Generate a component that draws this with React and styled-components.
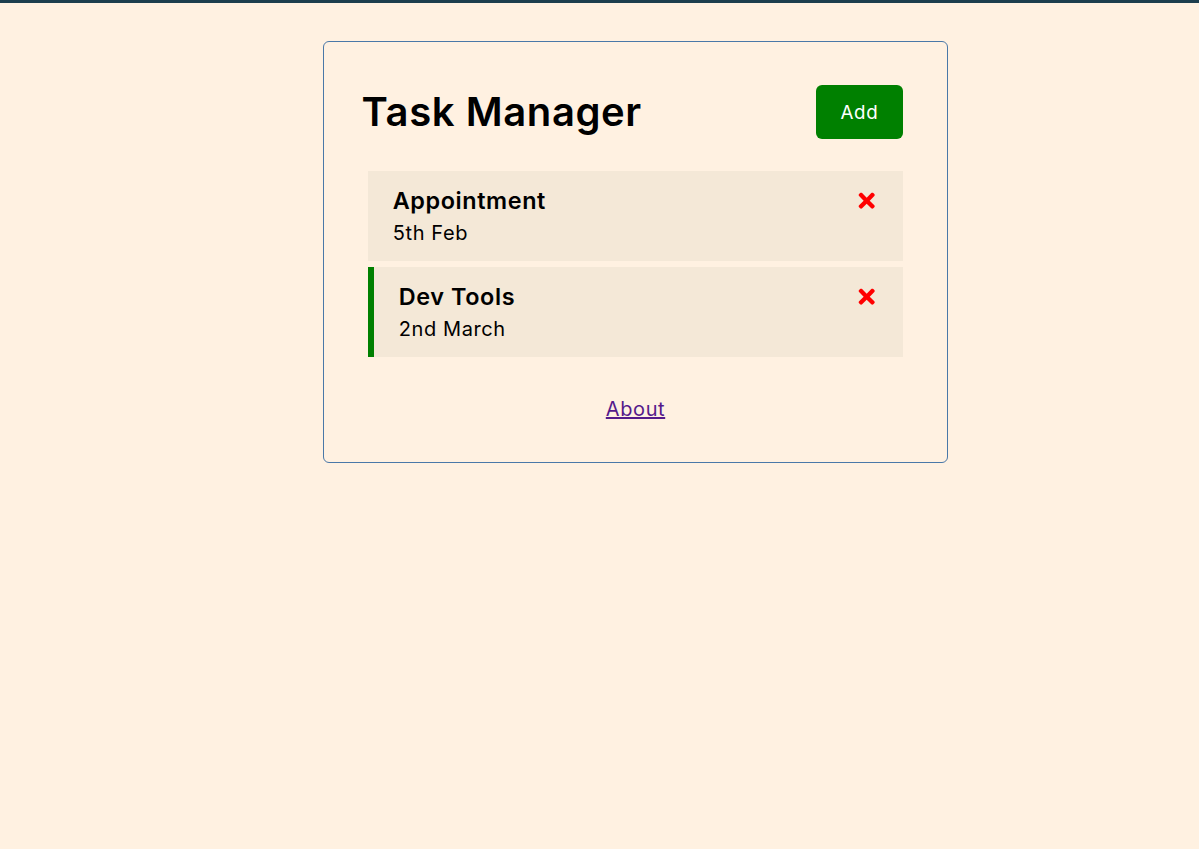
import React from 'react';
import styled, { createGlobalStyle } from 'styled-components';
import { FaTimes } from 'react-icons/fa';

const tasks = [
	{ id: 1, text: 'Appointment', day: '5th Feb', reminder: false },
	{ id: 2, text: 'Dev Tools', day: '2nd March', reminder: true },
];

export default function App() {
	return (
		<>
			<GlobalStyle />
			<TopBar />
			<Container>
				<Header>
					<Title>Task Manager</Title>
					<Button>Add</Button>
				</Header>
				<div>
					{tasks.map((task) => (
						<Task key={task.id} reminder={task.reminder}>
							<TaskTitle>
								{task.text}
								<FaTimes style={{ color: 'red', cursor: 'pointer' }} />
							</TaskTitle>
							<TaskDay>{task.day}</TaskDay>
						</Task>
					))}
				</div>
				<Footer>
					<a href="#about">About</a>
				</Footer>
			</Container>
		</>
	);
}

const GlobalStyle = createGlobalStyle`
	* {
		box-sizing: border-box;
		margin: 0;
		padding: 0;
	}
	body {
		background: #fff1e1;
		font-family: Inter, 'Open Sans', sans-serif;
		color: #000;
	}
`;
const TopBar = styled.div`
	height: 3px;
	background: #1d3e4d;
`;
const Container = styled.div`
	width: 625px;
	margin: 37.5px 0 0 323px;
	border: 1px solid #4a78a8;
	border-radius: 6px;
	padding: 37.5px;
`;
const Header = styled.header`
	display: flex;
	justify-content: space-between;
	align-items: center;
	margin-bottom: 25px;
`;
const Title = styled.h1`
	font-size: 40px;
	font-weight: 600;
	line-height: 60px;
	letter-spacing: 0.6px;
`;
const Button = styled.button`
	height: 54px;
	margin: 6.25px;
	padding: 0 25px;
	border: none;
	border-radius: 6px;
	background: #008000;
	color: #fff;
	font-family: inherit;
	font-size: 18.75px;
	letter-spacing: 0.6px;
	cursor: pointer;
`;
const Task = styled.div`
	margin: 6.25px;
	padding: 12.5px 25px;
	background: #f4e8d7;
	border-left: ${(props) => (props.reminder ? '6.25px solid #008000' : 'none')};
	cursor: pointer;
`;
const TaskTitle = styled.h3`
	display: flex;
	justify-content: space-between;
	align-items: center;
	font-size: 23.4px;
	font-weight: 600;
	line-height: 35px;
	letter-spacing: 0.6px;
`;
const TaskDay = styled.p`
	font-size: 20px;
	line-height: 30px;
	letter-spacing: 0.6px;
`;
const Footer = styled.footer`
	margin-top: 37.5px;
	text-align: center;
	font-size: 20px;
	line-height: 30px;
	letter-spacing: 0.6px;
	a {
		color: #551a8b;
	}
`;
